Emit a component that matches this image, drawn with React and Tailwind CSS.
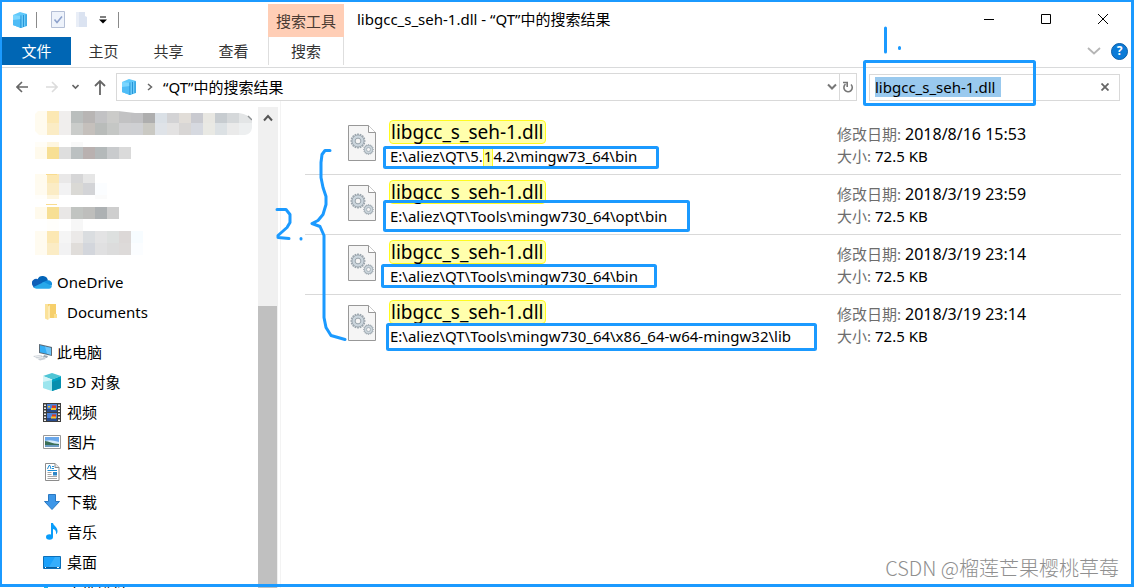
import { useState } from 'react';

const results = [
  { id: 1, path: ['E:\\aliez\\QT\\5.', '1', '4.2\\mingw73_64\\bin'], date: '2018/8/16 15:53', size: '72.5 KB' },
  { id: 2, path: ['E:\\aliez\\QT\\Tools\\mingw730_64\\opt\\bin'], date: '2018/3/19 23:59', size: '72.5 KB' },
  { id: 3, path: ['E:\\aliez\\QT\\Tools\\mingw730_64\\bin'], date: '2018/3/19 23:14', size: '72.5 KB' },
  { id: 4, path: ['E:\\aliez\\QT\\Tools\\mingw730_64\\x86_64-w64-mingw32\\lib'], date: '2018/3/19 23:14', size: '72.5 KB' },
];

// one entry per strip of censored blocks: [y, height, colours]
const mosaic = [
  [0, 12, ['#fffbef', '#fce8b3', '#f0eeed', '#babebd', '#b8b5b4', '#c2c2c4', '#cbcbc9', '#c2c2c3', '#c0c0c2', '#aeaeae', '#dae0e6', '#d3d3d5', '#e1ddd8', '#c9cad0', '#e8e7e2', '#c7ccd0', '#d5d8da', '#e3e5e6']],
  [12, 12, ['#fffbef', '#fbecc5', '#f0eeed', '#caccca', '#c5c0bc', '#b9bcba', '#c5c7c5', '#d0d0d2', '#cfd0d3', '#cac9c3', '#dfe3e8', '#e3e2e2', '#d8d6d5', '#d6d9e0', '#e9e9e4', '#dce1e4', '#eaeaea', '#edeff0']],
  [31, 5, ['#fffdf7', '#fef6e0', '#ffffff', '#f9f9f9']],
  [36, 12, ['#fffaec', '#f7df94', '#dedede', '#bbc0c1', '#b9b1b0', '#b4b9ba', '#c9cbcd', '#dadada']],
  [63, 9, ['#fffbef', '#fce8b3', '#e9e8e8', '#d6d6d7', '#e6e6e6']],
  [72, 12, ['#fffbf0', '#fbecc5', '#f2f2f3', '#dad9d5', '#d3d4d7', '#fbfdff']],
  [84, 4, ['#fffefb', '#fef6e0', '#ffffff', '#ffffff', '#ffffff', '#fbfbfb']],
  [96, 12, ['#fffaec', '#f7df94', '#e9e7e6', '#c1c4c1', '#bebebc', '#adb1b3', '#cecece']],
  [108, 12, ['#ffffff', '#fffefb', '#ffffff', '#f7f7f7']],
  [120, 12, ['#fffbf0', '#fce8b3', '#f5f5f5', '#ebe9e8', '#dadde0', '#e3e3e4', '#dde0df', '#dcd8d7', '#f7fcff']],
  [132, 12, ['#fffbf0', '#fbecc5', '#f2f2f3', '#e0ddda', '#d3d6dc', '#e0e0e1', '#dcdcdc', '#dddad9', '#fbfdff']],
];

function SearchFolderIcon({ className }) {
  return (
    <svg viewBox="0 0 16 18" className={className} aria-hidden="true">
      <path d="M1 4 8 1l7 2v12l-6 2-8-3z" fill="#5fc9fb" />
      <path d="M1 4 9 5v12l-8-3z" fill="#7bd6ff" />
      <path d="M1 9 9 8v9l-8-3z" fill="#4fbcf6" />
      <path d="M9 4.500V17M11.500 4v12M14 3.500V15" stroke="#2796d8" strokeWidth="1.200" />
      <path d="M10.200 4.500V16.500M12.700 4v11.500" stroke="#74cdf8" strokeWidth="1" />
    </svg>
  );
}

function OneDriveIcon() {
  return (
    <svg viewBox="0 0 20 14" className="h-[14px] w-5" aria-hidden="true">
      <path d="M5.500 4.500A5.500 5.500 0 0 1 16 5.500L10 9z" fill="#0364b8" />
      <path d="M.3 10A4.300 4.300 0 0 1 6.500 4.500L13 8.500 2 13z" fill="#0f5fb8" />
      <path d="M10 7.500l5-2a4 4 0 0 1 5 5L12 11z" fill="#1490df" />
      <path d="M1.500 12 12 7l7.800 4A3 3 0 0 1 16.500 13.700H4.500A4 4 0 0 1 1.500 12z" fill="#28a8ea" />
    </svg>
  );
}

function FolderIcon() {
  return (
    <svg viewBox="0 0 18 18" className="size-[18px]" aria-hidden="true">
      <path d="M2 1h11v14H2z" fill="#f6cf6b" />
      <path d="M2 1h3v16l-3-1.500z" fill="#fbe29a" />
      <path d="M5 3.500 7 2v13l-2 2z" fill="#fdebb5" />
      <path d="M11 11h3v4h-3z" fill="#fbe08f" />
    </svg>
  );
}

function ComputerIcon() {
  return (
    <svg viewBox="0 0 20 18" className="h-[18px] w-5" aria-hidden="true">
      <path d="m7 1 13 3v9L7 10z" fill="#5c6b78" />
      <path d="m8 2.300 11 2.600v6.800L8 9.200z" fill="#35aef5" />
      <path d="m13 3.500 6 1.400v6.800L15 10.800z" fill="#6bc5fa" />
      <path d="m12 12 4 1-1 2-4-1z" fill="#9aa7b2" />
      <path d="m1 13 8-1 5 4-6 1.500z" fill="#c7ced5" />
      <path d="m3 14 6-1M5 15.500l6-1" stroke="#fff" strokeWidth=".7" />
    </svg>
  );
}

function ObjectsIcon() {
  return (
    <svg viewBox="0 0 18 18" className="size-[18px]" aria-hidden="true">
      <path d="m9 0 9 3-9 3.500L0 3z" fill="#4fc5d5" />
      <path d="m0 3 9 3.500V18l-9-3z" fill="#d3f5f8" />
      <path d="m0 9 9-2v11l-9-3z" fill="#9be5ee" />
      <path d="m18 3-9 3.500V18l9-3z" fill="#00a3c4" />
      <path d="m9 9 9-3v9l-9 3z" fill="#078fae" />
    </svg>
  );
}

function VideoIcon() {
  return (
    <svg viewBox="0 0 18 19" className="h-[19px] w-[18px]" aria-hidden="true">
      <path d="M0 0h18v19H0z" fill="#3d3d3d" />
      <path d="M4 1h10v8H4zM4 10h10v8H4z" fill="#4c82d8" />
      <path d="M4 6h10v3H4zM4 15h10v3H4z" fill="#274b8c" />
      <path d="M9 2.500h4v3H9zM9 11.500h4v3H9z" fill="#d93b22" />
      <path d="M8 5h5v2H8zM8 13.500h5v2H8z" fill="#f1c232" />
      <path d="M5 3h2v1.500H5z" fill="#f1c232" />
      <path d="M2 1.500v17M16 1.500v17" stroke="#fff" strokeWidth="1.800" strokeDasharray="1.500 1.500" />
    </svg>
  );
}

function PictureIcon() {
  return (
    <svg viewBox="0 0 18 14" className="h-[14px] w-[18px]" aria-hidden="true">
      <path d="M.5.5h17v13H.5z" fill="#fff" stroke="#999" />
      <path d="M2 2h14v10H2z" fill="#6aa7ea" />
      <path d="M2 6q5-2 14 1v2H2z" fill="#d5ebfb" />
      <path d="M2 6c4 0 7 3 14 3v1H2z" fill="#3a6f57" />
      <path d="M2 10h14v2H2z" fill="#6b9ac0" />
    </svg>
  );
}

function DocumentIcon() {
  return (
    <svg viewBox="0 0 18 18" className="size-[18px]" aria-hidden="true">
      <path d="M2.500.5h9.500l4 4v13H2.500z" fill="#fff" stroke="#8c8c8c" />
      <path d="M12 .5v4h4" fill="#e8e8e8" stroke="#8c8c8c" />
      <path d="m4.500 6 1.500-3.500h1L8 6M9 3.500h2M9 5.500h2M4.500 7.500h9.500" stroke="#1c8ed6" fill="none" />
      <path d="M4.500 9.500h4M4.500 11.500h4M4.500 13.500h9.500M4.500 15.500h9.500" stroke="#a7a7a7" />
      <path d="M10 9h4v3.500h-4z" fill="#2f86c6" />
    </svg>
  );
}

function DownloadIcon() {
  return (
    <svg viewBox="0 0 18 18" className="size-[18px]" aria-hidden="true">
      <path d="M5.500 1.500h7v7h4L9 16.500 1.500 8.500h4z" fill="#3d97e8" stroke="#2a78c2" strokeLinejoin="round" />
    </svg>
  );
}

function MusicIcon() {
  return (
    <svg viewBox="0 0 18 18" className="size-[18px]" aria-hidden="true">
      <ellipse cx="6.500" cy="14" rx="3.500" ry="2.800" fill="#0a9dfa" />
      <path d="M8 0h2c.5 3 5 4 4.500 9-.3 1.200-1 2-1.500 2.200C13.500 8 12 6.500 10 6v8H8z" fill="#0a9dfa" />
    </svg>
  );
}

function DesktopIcon() {
  return (
    <svg viewBox="0 0 18 13" className="h-[13px] w-[18px]" aria-hidden="true">
      <path d="M.5.5h17v12H.5z" fill="#1ba1fb" stroke="#0c6fb8" />
      <path d="M12 1h5v10H6z" fill="#36aefc" />
      <path d="M1 11.500h16" stroke="#0b5e9e" />
      <path d="M2 11.500h1M14 11.500h2" stroke="#fff" />
    </svg>
  );
}

function DriveIcon() {
  return (
    <svg viewBox="0 0 18 18" className="size-[18px]" aria-hidden="true">
      <path d="M1 1h4v4H1z" fill="#12b7f5" />
      <path d="M1 8h16v7H1z" fill="#a0a0a0" />
    </svg>
  );
}

const gearTeeth = 'M0-7.500V7.500M-7.500 0H7.500M-5.300-5.300 5.300 5.300M5.300-5.300-5.300 5.300M-2.900-6.900 2.900 6.900M2.900-6.900-2.900 6.900M-6.900-2.900 6.900 2.900M-6.900 2.900 6.900-2.900';

function Gear({ x, y, scale }) {
  return (
    <g transform={`translate(${x} ${y}) scale(${scale})`}>
      <path d={gearTeeth} stroke="#98a3ab" strokeWidth="1.700" />
      <circle r="6" fill="#cbd5dc" stroke="#9aa5ad" strokeWidth=".8" />
      <circle r="2.900" fill="#f5f5f5" stroke="#98a3ab" />
    </g>
  );
}

function DllIcon() {
  return (
    <svg viewBox="0 0 28 36" className="h-9 w-7 shrink-0" aria-hidden="true">
      <path d="M.5.5h20l7 7v28H.5z" fill="#f5f5f5" stroke="#989898" />
      <path d="M20.500.5v7h7" fill="#fff" stroke="#989898" />
      <Gear x={10} y={16} scale={1} />
      <Gear x={20.500} y={24.500} scale={0.7} />
    </svg>
  );
}

const places = [
  { name: '3D 对象', Icon: ObjectsIcon },
  { name: '视频', Icon: VideoIcon },
  { name: '图片', Icon: PictureIcon },
  { name: '文档', Icon: DocumentIcon },
  { name: '下载', Icon: DownloadIcon },
  { name: '音乐', Icon: MusicIcon },
  { name: '桌面', Icon: DesktopIcon },
  { name: '本地磁盘 (C:)', Icon: DriveIcon },
];

function NavItem({ name, Icon, nested }) {
  return (
    <li>
      <a href="#" className={`flex h-[30px] items-center ${nested ? 'gap-1.5 pl-[41px]' : 'gap-[5px] pl-[30px]'}`}>
        <Icon />
        <span>{name}</span>
      </a>
    </li>
  );
}

function TitleBar() {
  return (
    <header className="flex h-[35px]">
      <div className="flex w-[266px] items-center pl-2.5">
        <SearchFolderIcon className="h-[18px] w-4" />
        <span className="ml-2 h-4 w-px bg-[#8a8a8a]" />
        <button type="button" aria-label="属性" className="ml-3.5">
          <svg viewBox="0 0 14 17" className="h-[17px] w-3.5">
            <path d="M.5.5h13v16H.5z" fill="#eef3fb" stroke="#b4bfd6" />
            <path d="m3.500 8.500 2.500 3 5-6" fill="none" stroke="#8ea2cc" strokeWidth="1.600" />
          </svg>
        </button>
        <button type="button" aria-label="新建文件夹" className="ml-[11px]">
          <svg viewBox="0 0 12 17" className="h-[17px] w-3">
            <path d="M0 1h9v4l2 1v10H3z" fill="#dbe3f1" />
            <path d="M0 1h3v15H0z" fill="#e9eef7" />
          </svg>
        </button>
        <button type="button" aria-label="自定义快速访问工具栏" className="ml-[11px]">
          <svg viewBox="0 0 8 8" className="size-2">
            <path d="M1 1h6" stroke="#000" />
            <path d="M0 3.500h8L4 7.500z" />
          </svg>
        </button>
        <span className="ml-[11px] h-4 w-px bg-[#8a8a8a]" />
      </div>
      <div className="mt-0.5 flex w-[76px] items-center justify-center bg-[#ffceb6] text-[#4a3a32]">搜索工具</div>
      <h1 className="ml-[13px] flex items-center pb-0.5">libgcc_s_seh-1.dll - “QT”中的搜索结果</h1>
      <div className="ml-auto flex pb-0.5">
        <button type="button" aria-label="最小化" className="flex w-[57px] items-center justify-center">
          <svg viewBox="0 0 10 10" className="size-2.5"><path d="M0 5.500h10" stroke="#000" /></svg>
        </button>
        <button type="button" aria-label="最大化" className="flex w-[57px] items-center justify-center">
          <svg viewBox="0 0 10 10" className="size-2.5"><path d="M.5.5h9v9h-9z" fill="none" stroke="#000" /></svg>
        </button>
        <button type="button" aria-label="关闭" className="flex w-[57px] items-center justify-center">
          <svg viewBox="0 0 10 10" className="size-2.5"><path d="m0 0 10 10M10 0 0 10" stroke="#000" /></svg>
        </button>
      </div>
    </header>
  );
}

function Ribbon() {
  return (
    <nav className="flex h-[31px] border-b border-[#d9dadb] pb-0.5 text-[#333]">
      <button type="button" className="w-[69px] bg-[#0066b4] text-white">文件</button>
      <button type="button" className="w-[65px]">主页</button>
      <button type="button" className="w-[65px]">共享</button>
      <button type="button" className="w-[65px]">查看</button>
      <button type="button" className="ml-0.5 w-[76px] border-x border-[#dedede]">搜索</button>
      <div className="ml-auto flex items-center gap-2.5 pr-[3px]">
        <button type="button" aria-label="展开功能区">
          <svg viewBox="0 0 14 8" className="h-2 w-3.5">
            <path d="m1 1 6 5.500L13 1" fill="none" stroke="#b5b5b5" strokeWidth="1.800" />
          </svg>
        </button>
        <button type="button" aria-label="帮助" className="size-[17px] rounded-full border border-[#0a5ea8] bg-[#0b7bd7] text-xs leading-none font-bold text-white">
          ?
        </button>
      </div>
    </nav>
  );
}

function AddressBar() {
  const [query, setQuery] = useState('libgcc_s_seh-1.dll');

  return (
    <div className="flex items-center pt-[5px] pr-[11px] pl-3.5">
      <div className="flex w-[100px] items-center text-[#666]">
        <button type="button" aria-label="后退">
          <svg viewBox="0 0 12 12" className="size-3"><path d="M12 6H1M6 1 1 6l5 5" fill="none" stroke="currentColor" strokeWidth="1.600" /></svg>
        </button>
        <button type="button" aria-label="前进" className="ml-[18px] text-[#dcdcdc]">
          <svg viewBox="0 0 12 12" className="size-3"><path d="M0 6h11M6 1l5 5-5 5" fill="none" stroke="currentColor" strokeWidth="1.600" /></svg>
        </button>
        <button type="button" aria-label="最近浏览的位置" className="ml-3.5">
          <svg viewBox="0 0 7 6" className="h-1.5 w-[7px]"><path d="m.5 1 3 3 3-3" fill="none" stroke="currentColor" strokeWidth="1.600" /></svg>
        </button>
        <button type="button" aria-label="上移" className="ml-[15px]">
          <svg viewBox="0 0 12 16" className="h-4 w-3"><path d="M6 16V2M1 7l5-5 5 5" fill="none" stroke="currentColor" strokeWidth="1.800" /></svg>
        </button>
      </div>
      <div className="flex h-7 grow items-center border border-[#d9d9d9] pl-1">
        <SearchFolderIcon className="h-[18px] w-4" />
        <svg viewBox="0 0 6 8" className="ml-2.5 h-2 w-1.5"><path d="m1 1 3.500 3L1 7" fill="none" stroke="#666" strokeWidth="1.500" /></svg>
        <span className="ml-2.5">“QT”中的搜索结果</span>
        <button type="button" aria-label="历史记录" className="ml-auto pr-0.5">
          <svg viewBox="0 0 10 8" className="h-2 w-2.5"><path d="m1 1.500 4 4 4-4" fill="none" stroke="#777" strokeWidth="2" /></svg>
        </button>
        <button type="button" aria-label="刷新" className="flex h-full w-[17px] items-center justify-center border-l border-[#d9d9d9]">
          <svg viewBox="0 0 12 12" className="size-3">
            <path d="M9 3.500A4.200 4.200 0 1 1 3.500 3.200M1 1.500h4.200V6" fill="none" stroke="#777" strokeWidth="1.600" />
          </svg>
        </button>
      </div>
      <form className="ml-3 flex h-[27px] w-[251px] items-center border border-[#d9d9d9] pl-[5px]">
        <input
          aria-label="搜索"
          value={query}
          onChange={(e) => setQuery(e.target.value)}
          className="field-sizing-content h-5 bg-[#99c9ee] pr-1.5 leading-5 outline-none"
        />
        <button type="button" aria-label="清除" onClick={() => setQuery('')} className="mr-2.5 ml-auto">
          <svg viewBox="0 0 8 8" className="size-2"><path d="m.5.5 7 7M7.500.5l-7 7" stroke="#666" strokeWidth="1.800" /></svg>
        </button>
      </form>
    </div>
  );
}

function Sidebar() {
  return (
    <aside className="w-64 overflow-hidden">
      <svg viewBox="0 0 217 144" className="mt-[10px] ml-[33px] h-36 w-[217px]" aria-hidden="true">
        <clipPath id="smudge">
          <path d="M3 0h80l17 2h104q10 1 13 8v7q-1 6-7 7H4L0 20V3zM0 28h217v116H0z" />
        </clipPath>
        <g clipPath="url(#smudge)" shapeRendering="crispEdges">
          {mosaic.map(([y, height, colors]) =>
            colors.map((color, i) => (
              <rect key={`${y}-${i}`} x={i * 12} y={y} width={i === 17 ? 13 : 12} height={height} fill={color} />
            ))
          )}
        </g>
        <path d="m213 5 4 4" stroke="#8e9194" strokeWidth="1.500" />
        <path d="M11 63.500h11M11 93.500h11" stroke="#f9dc8f" />
      </svg>
      <ul className="mt-3">
        <NavItem name="OneDrive" Icon={OneDriveIcon} />
        <NavItem name="Documents" Icon={FolderIcon} nested />
      </ul>
      <ul className="mt-2.5">
        <NavItem name="此电脑" Icon={ComputerIcon} />
        {places.map((place) => (
          <NavItem key={place.name} name={place.name} Icon={place.Icon} nested />
        ))}
      </ul>
    </aside>
  );
}

function ResultRow({ result }) {
  return (
    <li className="flex h-[60px] border-b border-[#d9d9d9] pl-[43px] last:border-b-0">
      <div className="pt-2.5">
        <DllIcon />
      </div>
      <div className="ml-[13px] w-[448px] shrink-0 pt-[5px]">
        <h2 className="h-6 w-fit rounded-sm border border-[#fffb1e] bg-[#ffffac] px-px text-[19px] leading-[22px]">
          libgcc_s_seh-1.dll
        </h2>
        <p className="pl-px leading-6 whitespace-nowrap">
          {result.path.map((part) => (part === '1' ? <mark key={part} className="border-x border-[#fffb1e] bg-[#ffffac]">{part}</mark> : part))}
        </p>
      </div>
      <dl className="pt-2 leading-[22px] whitespace-nowrap">
        <div className="flex gap-1">
          <dt className="text-[#6d6d6d]">修改日期:</dt>
          <dd className="text-base leading-[22px]">{result.date}</dd>
        </div>
        <div className="flex gap-1">
          <dt className="text-[#6d6d6d]">大小:</dt>
          <dd>{result.size}</dd>
        </div>
      </dl>
    </li>
  );
}

// pen strokes and boxes drawn on top of the window
function Annotations() {
  return (
    <svg
      viewBox="0 0 1135 588"
      className="pointer-events-none absolute top-0 left-0 h-[588px] w-[1135px]"
      fill="none"
      stroke="#1b9aff"
      strokeWidth="3"
      strokeLinecap="round"
      strokeLinejoin="round"
      aria-hidden="true"
    >
      <rect x="864.500" y="61.500" width="170" height="43" rx="1" />
      <rect x="384.500" y="147.500" width="273" height="20" rx="1" />
      <rect x="384.500" y="201.500" width="304" height="29" rx="1" />
      <rect x="382.500" y="265.500" width="273" height="21" rx="1" />
      <rect x="387.500" y="324.500" width="428" height="25" rx="1" />
      <path d="M885.500 28v24M899.500 47.500v1" />
      <path d="M277 209.500h9l4 5v8l-3 5-9 8v2l11 1M301 238.500v.5" />
      <path d="M330 150.500h-5l-3 4-1 8v15l2 10 3 9v8l-3 10-5 6-6 3 8 3 4 9v82l2 10 5 8 7 2 7 2" />
    </svg>
  );
}

export default function App() {
  return (
    <div className="relative flex h-screen flex-col overflow-hidden bg-white pt-0.5 pr-1 pl-0.5 font-['Noto_Sans','Noto_Sans_CJK_SC',sans-serif] text-[15px] leading-5 text-black">
      <TitleBar />
      <Ribbon />
      <AddressBar />
      <main className="flex min-h-0 flex-1">
        <Sidebar />
        <div className="mt-1.5 flex w-5 flex-col bg-[#f0f0f0]">
          <svg viewBox="0 0 10 8" className="mx-auto mt-[7px] h-2 w-2.5" aria-hidden="true">
            <path d="m1 6.500 4-4.500 4 4.500" fill="none" stroke="#555" strokeWidth="2" />
          </svg>
          <div className="mt-[184px] mr-px grow bg-[#c0c0c0]" />
        </div>
        <ul className="ml-0.5 grow border-l border-[#f3f3f3] pt-3.5 pr-2.5 pl-6">
          {results.map((result) => (
            <ResultRow key={result.id} result={result} />
          ))}
        </ul>
      </main>
      <div className="pointer-events-none absolute top-0 right-px bottom-px left-0 border-t-2 border-r-3 border-b-3 border-l-2 border-[#1b9aff]" />
      <Annotations />
      <p className="absolute right-4 bottom-2 font-['Noto_Sans_CJK_SC',sans-serif] text-xl leading-6 font-light text-[#8f8f8f]">
        CSDN @榴莲芒果樱桃草莓
      </p>
    </div>
  );
}
